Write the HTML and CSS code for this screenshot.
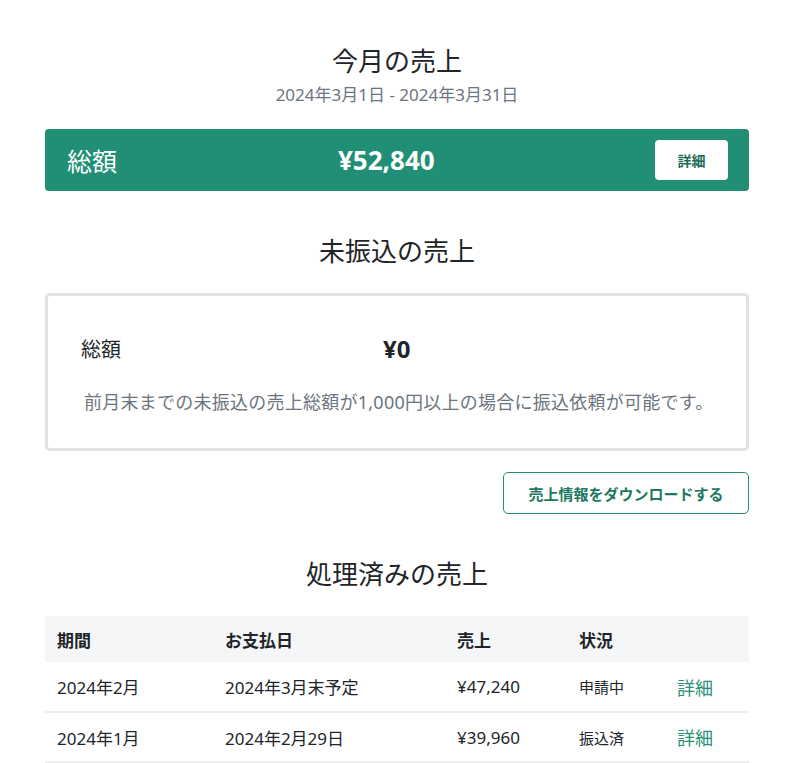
FILE: index.html
```html
<!DOCTYPE html>
<html lang="ja">
  <head>
    <meta charset="UTF-8" />
    <meta name="viewport" content="width=device-width, initial-scale=1.0" />
    <title>売上</title>
    <link rel="stylesheet" href="styles.css">
  </head>
  <body>
    <main class="main">
      <section class="section">
        <h2 class="section-title">今月の売上</h2>
        <p class="period">2024年3月1日 - 2024年3月31日</p>
        <div class="total-bar">
          <span class="total-label">総額</span>
          <span class="total-amount">¥52,840</span>
          <a href="#" class="detail-button">詳細</a>
        </div>
      </section>

      <section class="section">
        <h2 class="section-title">未振込の売上</h2>
        <div class="pending-box">
          <div class="pending-row">
            <span class="pending-label">総額</span>
            <span class="pending-amount">¥0</span>
          </div>
          <p class="pending-note">前月末までの未振込の売上総額が1,000円以上の場合に振込依頼が可能です。</p>
        </div>
        <div class="download">
          <a href="#" class="download-button">売上情報をダウンロードする</a>
        </div>
      </section>

      <section class="section">
        <h2 class="section-title">処理済みの売上</h2>
        <table class="sales-table">
          <thead>
            <tr>
              <th class="col-period">期間</th>
              <th class="col-date">お支払日</th>
              <th class="col-amount">売上</th>
              <th class="col-status">状況</th>
              <th></th>
            </tr>
          </thead>
          <tbody>
            <tr>
              <td>2024年2月</td>
              <td>2024年3月末予定</td>
              <td>¥47,240</td>
              <td class="status">申請中</td>
              <td><a href="#" class="detail-link">詳細</a></td>
            </tr>
            <tr>
              <td>2024年1月</td>
              <td>2024年2月29日</td>
              <td>¥39,960</td>
              <td class="status">振込済</td>
              <td><a href="#" class="detail-link">詳細</a></td>
            </tr>
          </tbody>
        </table>
      </section>
    </main>
  </body>
</html>
```

FILE: styles.css
```css
* {
  box-sizing: border-box;
}
:root {
  --text-color: #212529;
  --muted-color: #6c757d;
  --primary-color: #218f76;
  --link-color: #2b8f78;
  --border-color: #dfe1e3;
  --table-head-bg: #f4f6f8;
}

body {
  margin: 0;
  font-family: "Noto Sans", "Noto Sans CJK JP", sans-serif;
  color: var(--text-color);
  background: #fff;
}

.main {
  width: 704px;
  margin-left: 45px;
  padding-top: 42px;
}

.section-title {
  margin: 0;
  font-size: 26px;
  font-weight: 400;
  line-height: 38px;
  text-align: center;
}

.period {
  margin: 0;
  font-size: 17px;
  line-height: 30px;
  color: var(--muted-color);
  text-align: center;
}

.total-bar {
  display: flex;
  align-items: center;
  height: 62px;
  margin-top: 19px;
  padding: 0 21px 0 22px;
  background: var(--primary-color);
  border-radius: 4px;
  color: #fff;
}

.total-label {
  width: 271px;
  font-size: 25px;
}

.total-amount {
  font-size: 26px;
  font-weight: 700;
}

.detail-button {
  display: flex;
  align-items: center;
  justify-content: center;
  width: 73px;
  height: 40px;
  margin-left: auto;
  background: #fff;
  border-radius: 4px;
  color: #1d6b59;
  font-size: 14px;
  font-weight: 700;
  text-decoration: none;
}

.section + .section {
  margin-top: 41px;
}

.pending-box {
  margin-top: 23px;
  padding: 36px 20px 31px 33px;
  border: 3px solid var(--border-color);
  border-radius: 5px;
}

.pending-row {
  display: flex;
  align-items: center;
}

.pending-label {
  width: 302px;
  font-size: 20px;
}

.pending-amount {
  font-size: 24px;
  font-weight: 700;
}

.pending-note {
  margin: 22px 0 0 3px;
  font-size: 18px;
  letter-spacing: 0.25px;
  line-height: 30px;
  white-space: nowrap;
  color: var(--muted-color);
}

.download {
  display: flex;
  justify-content: flex-end;
  margin-top: 21px;
}

.download-button {
  display: flex;
  align-items: center;
  justify-content: center;
  width: 246px;
  height: 42px;
  border: 1px solid var(--primary-color);
  border-radius: 5px;
  color: #1d7862;
  font-size: 15px;
  font-weight: 700;
  text-decoration: none;
}

.sales-table {
  width: 100%;
  margin-top: 23px;
  border-collapse: collapse;
  font-size: 17px;
}

.sales-table th {
  height: 46px;
  padding: 0 12px;
  background: var(--table-head-bg);
  font-weight: 700;
  text-align: left;
}

.sales-table td {
  height: 50px;
  padding: 0 12px;
  border-bottom: 2px solid #eceeef;
}

.col-period {
  width: 168px;
}

.col-date {
  width: 232px;
}

.col-amount {
  width: 122px;
}

.col-status {
  width: 98px;
}

.status {
  font-size: 15px;
}

.detail-link {
  color: var(--link-color);
  font-size: 18px;
  text-decoration: none;
}
```
